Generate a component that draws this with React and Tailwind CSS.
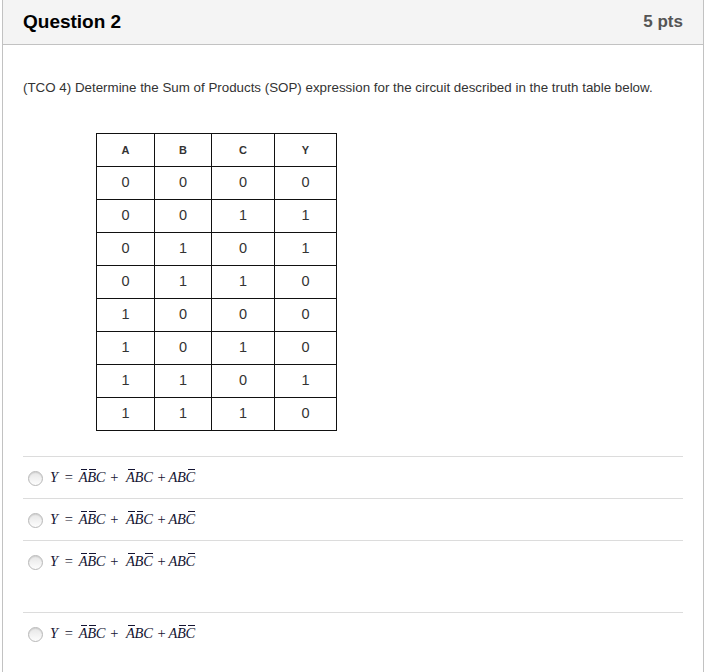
import React from 'react'

const ROWS = [
  [0, 0, 0, 0],
  [0, 0, 1, 1],
  [0, 1, 0, 1],
  [0, 1, 1, 0],
  [1, 0, 0, 0],
  [1, 0, 1, 0],
  [1, 1, 0, 1],
  [1, 1, 1, 0],
]

// each term: list of [letter, negated]
const OPTIONS = [
  [[['A', 1], ['B', 1], ['C', 0]], [['A', 1], ['B', 0], ['C', 0]], [['A', 0], ['B', 0], ['C', 1]]],
  [[['A', 1], ['B', 1], ['C', 0]], [['A', 1], ['B', 1], ['C', 0]], [['A', 0], ['B', 0], ['C', 1]]],
  [[['A', 1], ['B', 1], ['C', 0]], [['A', 1], ['B', 0], ['C', 1]], [['A', 0], ['B', 0], ['C', 1]]],
  [[['A', 1], ['B', 1], ['C', 0]], [['A', 1], ['B', 0], ['C', 0]], [['A', 0], ['B', 1], ['C', 1]]],
]

const Letter = ({ l, neg }) => (
  <span className="relative inline-block">
    {l}
    {neg ? <span className="absolute left-[2px] right-[0px] top-[1px] h-px bg-current" /> : null}
  </span>
)

const Term = ({ term, className = '' }) => (
  <span className={`inline-flex ${className}`}>
    {term.map(([l, neg], i) => (
      <Letter key={i} l={l} neg={neg} />
    ))}
  </span>
)

const Radio = () => (
  <span className="inline-block w-[15px] h-[15px] rounded-full border border-[#b8b8b8] bg-gradient-to-b from-[#e6e6e6] to-[#fdfdfd] shadow-[inset_0_1px_1px_rgba(0,0,0,0.1)]" />
)

const Formula = ({ terms }) => (
  <span className="flex items-center font-['Liberation_Serif',serif] italic text-[14.5px] leading-[18px] text-[#141432] tracking-[-0.3px]">
    <span>Y</span>
    <span className="ml-[7px] not-italic">=</span>
    <Term term={terms[0]} className="ml-[6px]" />
    <span className="ml-[5px] not-italic">+</span>
    <Term term={terms[1]} className="ml-[8px]" />
    <span className="ml-[5px] not-italic">+</span>
    <Term term={terms[2]} className="ml-[3px]" />
  </span>
)

export default function App() {
  const colW = ['w-[58px]', 'w-[57px]', 'w-[63px]', 'w-[62px]']

  return (
    <div className="bg-white h-[672px] font-['Liberation_Sans',Arial,sans-serif]">
      <div className="ml-[2px] w-[702px] h-[672px] border-x border-[#c2c2c2]">
        <div className="h-[45px] bg-[#f4f4f4] border-b border-[#c2c2c2] flex items-center justify-between px-[20px]">
          <h2 className="text-[19px] font-bold text-black">Question 2</h2>
          <span className="text-[17px] font-bold text-[#555]">5 pts</span>
        </div>

        <div className="px-[20px]">
          <p className="mt-[33px] text-[13.35px] text-[#333]">
            (TCO 4) Determine the Sum of Products (SOP) expression for the circuit described in the truth table below.
          </p>

          <table className="mt-[35px] ml-[73px] border-collapse border border-[#111]">
            <thead>
              <tr className="h-[33px]">
                {['A', 'B', 'C', 'Y'].map((h, i) => (
                  <th key={h} className={`${colW[i]} border border-[#111] text-[11px] font-bold text-[#333] text-center`}>
                    {h}
                  </th>
                ))}
              </tr>
            </thead>
            <tbody>
              {ROWS.map((r, ri) => (
                <tr key={ri} className="h-[33px]">
                  {r.map((v, i) => (
                    <td key={i} className="border border-[#111] text-[14.5px] text-[#333] text-center">
                      {v}
                    </td>
                  ))}
                </tr>
              ))}
            </tbody>
          </table>

          <div className="mt-[25px]">
            {OPTIONS.map((terms, i) => (
              <div
                key={i}
                className={`border-t border-[#dcdcdc] flex items-start gap-[7px] pl-[5px] pt-[11px] ${i === 2 ? 'h-[72px]' : 'h-[42px]'}`}
              >
                <span className="mt-[1px]"><Radio /></span>
                <Formula terms={terms} />
              </div>
            ))}
          </div>
        </div>
      </div>
    </div>
  )
}
